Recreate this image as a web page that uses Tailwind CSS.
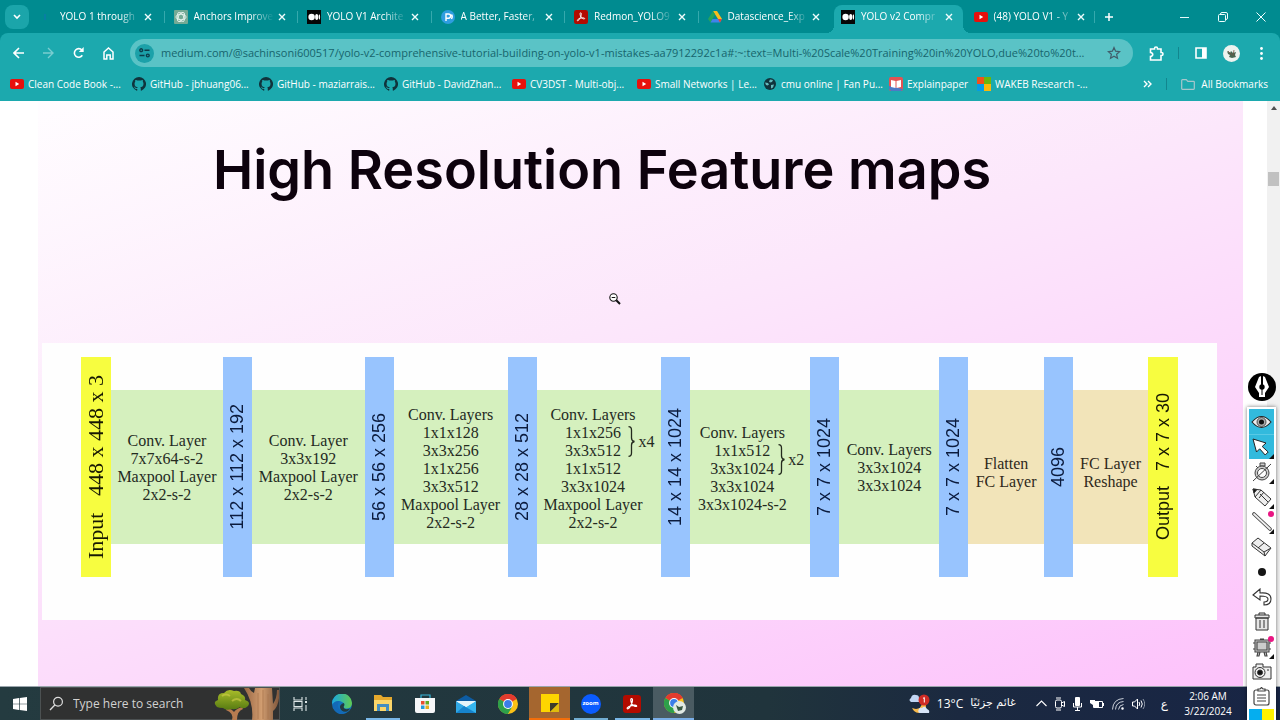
<!DOCTYPE html>
<html lang="en">
<head>
<meta charset="utf-8">
<meta name="viewport" content="width=device-width, initial-scale=1">
<title>YOLO v2 Comprehensive Tutorial</title>
<script src="https://cdn.jsdelivr.net/npm/@tailwindcss/browser@4"></script>
</head>
<body class="flex h-screen flex-col overflow-hidden bg-white font-['Open_Sans','Noto_Sans',sans-serif] text-[10px] text-white">

<svg width="0" height="0" class="absolute" aria-hidden="true">
  <symbol id="close" viewBox="0 0 8 8"><path d="M1 1l6 6M7 1L1 7" stroke="#effcfc" stroke-width="1.4" fill="none"/></symbol>
  <symbol id="youtube" viewBox="0 0 14 10"><rect width="14" height="10" rx="2" fill="#e8100c"/><path d="M5.5 2.8v4.4L9.2 5z" fill="#fff"/></symbol>
  <symbol id="medium" viewBox="0 0 14 14"><rect width="14" height="14" fill="#060606"/><circle cx="4.6" cy="7" r="3.2" fill="#fff"/><ellipse cx="9.7" cy="7" rx="1.6" ry="3" fill="#fff"/><ellipse cx="12.4" cy="7" rx=".7" ry="2.7" fill="#fff"/></symbol>
  <symbol id="github" viewBox="0 0 16 16"><path fill="#10333c" d="M8 0a8 8 0 0 0-2.53 15.59c.4.07.55-.17.55-.38v-1.49c-2.01.37-2.53-.49-2.69-.94-.09-.23-.48-.94-.82-1.13-.28-.15-.68-.52-.01-.53.63-.01 1.08.58 1.23.82.72 1.21 1.87.87 2.33.66.07-.52.28-.87.51-1.07-1.78-.2-3.64-.89-3.64-3.95 0-.87.31-1.59.82-2.15-.08-.2-.36-1.02.08-2.12 0 0 .67-.21 2.2.82a7.6 7.6 0 0 1 4 0c1.53-1.04 2.2-.82 2.2-.82.44 1.1.16 1.92.08 2.12.51.56.82 1.27.82 2.15 0 3.07-1.87 3.75-3.65 3.95.29.25.54.73.54 1.48v2.2c0 .21.15.46.55.38A8 8 0 0 0 8 0"/></symbol>
  <symbol id="acrobat" viewBox="0 0 18 18"><rect width="18" height="18" rx="3" fill="#b30b00"/><path d="M8.6 3.6c1.500 0 .9 3.300-.4 6-1 2.200-2.600 4.500-3.700 4.200-1.200-.5.600-2.300 3.900-3.200 2.700-.8 5.300-.7 5.300.3 0 1.300-2.700.400-4.300-1.400-1.500-1.800-2.300-5.900-.8-5.900z" fill="none" stroke="#fff" stroke-width="1.200"/></symbol>
  <symbol id="chrome" viewBox="0 0 20 20"><circle cx="10" cy="10" r="10" fill="#fbc116"/><path d="M10 10L1.300 5A10 10 0 0 1 18.700 5z" fill="#e33b2e"/><path d="M10 0A10 10 0 0 1 18.700 5H10z" fill="#e33b2e"/><path d="M1.300 5A10 10 0 0 0 10 20l4.300-7.500L10 10z" fill="#2da04a"/><circle cx="10" cy="10" r="4.900" fill="#fff"/><circle cx="10" cy="10" r="3.900" fill="#3b7de9"/></symbol>
  <symbol id="corner" viewBox="0 0 5 5"><path d="M5 0v5H0z" fill="#111"/></symbol>
</svg>

<header class="shrink-0 bg-[#008b90]">
  <div class="flex h-[33px] items-center">
    <button aria-label="Search tabs" class="ml-[5px] mr-1 flex h-6 w-6 shrink-0 items-center justify-center rounded-lg bg-[#1ba5aa]"><svg width="8" height="6" viewBox="0 0 8 6"><path d="M1 1l3 3 3-3" fill="none" stroke="#fff" stroke-width="1.600"/></svg></button>
    <nav aria-label="Tabs" class="flex h-full w-[1067px] text-[11px]">
      <div class="relative flex min-w-0 flex-1 items-center pl-[7px]"><svg class="h-[14px] w-[14px] shrink-0" viewBox="0 0 14 14"><path d="M5 4v6" stroke="#087fa3" stroke-width="2"/></svg><a href="#" class="ml-[6px] w-[80px] whitespace-nowrap text-[10px] [mask-image:linear-gradient(to_right,black_75%,transparent)]">YOLO 1 through</a><button aria-label="Close tab" class="ml-1"><svg width="8" height="8"><use href="#close"/></svg></button><i class="absolute right-[2px] h-3 w-px bg-[#35a9ad]"></i></div>
      <div class="relative flex min-w-0 flex-1 items-center pl-[7px]"><svg class="h-[14px] w-[14px] shrink-0" viewBox="0 0 14 14"><rect width="14" height="14" rx="1" fill="#74aa95"/><g fill="none" stroke="#e8f5ef" stroke-width=".9"><ellipse cx="7" cy="7" rx="5" ry="2.700"/><ellipse cx="7" cy="7" rx="5" ry="2.700" transform="rotate(60 7 7)"/><ellipse cx="7" cy="7" rx="5" ry="2.700" transform="rotate(120 7 7)"/></g></svg><a href="#" class="ml-[6px] w-[80px] whitespace-nowrap text-[10px] [mask-image:linear-gradient(to_right,black_70%,transparent)]">Anchors Improve</a><button aria-label="Close tab" class="ml-1"><svg width="8" height="8"><use href="#close"/></svg></button><i class="absolute right-[2px] h-3 w-px bg-[#35a9ad]"></i></div>
      <div class="relative flex min-w-0 flex-1 items-center pl-[7px]"><svg class="h-[14px] w-[14px] shrink-0"><use href="#medium"/></svg><a href="#" class="ml-[6px] w-[80px] whitespace-nowrap text-[10px] [mask-image:linear-gradient(to_right,black_70%,transparent)]">YOLO V1 Archite</a><button aria-label="Close tab" class="ml-1"><svg width="8" height="8"><use href="#close"/></svg></button><i class="absolute right-[2px] h-3 w-px bg-[#35a9ad]"></i></div>
      <div class="relative flex min-w-0 flex-1 items-center pl-[7px]"><svg class="h-[14px] w-[14px] shrink-0" viewBox="0 0 14 14"><circle cx="7" cy="7" r="7" fill="#2e9ddf"/><path d="M5 11V4h2.500a2 2 0 0 1 0 4.200H5M10.500 4.500q1.500 2 0 4.500" fill="none" stroke="#fff" stroke-width="1.400"/></svg><a href="#" class="ml-[6px] w-[80px] whitespace-nowrap text-[10px] [mask-image:linear-gradient(to_right,black_80%,transparent)]">A Better, Faster,</a><button aria-label="Close tab" class="ml-1"><svg width="8" height="8"><use href="#close"/></svg></button><i class="absolute right-[2px] h-3 w-px bg-[#35a9ad]"></i></div>
      <div class="relative flex min-w-0 flex-1 items-center pl-[7px]"><svg class="h-[14px] w-[14px] shrink-0"><use href="#acrobat"/></svg><a href="#" class="ml-[6px] w-[80px] whitespace-nowrap text-[10px] [mask-image:linear-gradient(to_right,black_70%,transparent)]">Redmon_YOLO9</a><button aria-label="Close tab" class="ml-1"><svg width="8" height="8"><use href="#close"/></svg></button><i class="absolute right-[2px] h-3 w-px bg-[#35a9ad]"></i></div>
      <div class="relative flex min-w-0 flex-1 items-center pl-[7px]"><svg class="h-[14px] w-[14px] shrink-0" viewBox="0 0 14 14"><path d="M5 1h4l5 8h-4z" fill="#fbbc1c"/><path d="M5 1l2 3.500L2.500 12.500 0 9z" fill="#25a35b"/><path d="M4.500 9H14l-2 3.500H2.500z" fill="#4182eb"/><path d="M10 9h4l-2 3.500z" fill="#e94335"/></svg><a href="#" class="ml-[6px] w-[80px] whitespace-nowrap text-[10px] [mask-image:linear-gradient(to_right,black_75%,transparent)]">Datascience_Exp</a><button aria-label="Close tab" class="ml-1"><svg width="8" height="8"><use href="#close"/></svg></button></div>
      <div class="relative flex min-w-0 flex-1 items-center pl-[7px]"><div class="absolute bottom-0 left-0 right-[5px] top-[5px] rounded-t-lg bg-[#1ca9ae]"></div><i class="absolute -left-2 bottom-0 h-2 w-2 bg-[radial-gradient(circle_at_0_0,transparent_8px,#1ca9ae_8px)]"></i><i class="absolute bottom-0 right-[-3px] h-2 w-2 bg-[radial-gradient(circle_at_100%_0,transparent_8px,#1ca9ae_8px)]"></i><svg class="relative h-[14px] w-[14px] shrink-0"><use href="#medium"/></svg><a href="#" class="relative ml-[6px] w-[80px] whitespace-nowrap text-[10px] [mask-image:linear-gradient(to_right,black_70%,transparent)]">YOLO v2 Compr</a><button aria-label="Close tab" class="relative ml-1"><svg width="8" height="8"><use href="#close"/></svg></button></div>
      <div class="relative flex min-w-0 flex-1 items-center pl-[6px]"><svg class="h-[10px] w-[14px] shrink-0"><use href="#youtube"/></svg><a href="#" class="ml-[6px] w-[80px] whitespace-nowrap text-[10px] [mask-image:linear-gradient(to_right,black_75%,transparent)]">(48) YOLO V1 - Y</a><button aria-label="Close tab" class="ml-[3px]"><svg width="8" height="8"><use href="#close"/></svg></button><i class="absolute right-[5px] h-3 w-px bg-[#35a9ad]"></i></div>
    </nav>
    <button aria-label="New tab" class="ml-1"><svg width="10" height="10" viewBox="0 0 10 10"><path d="M5 1v8M1 5h8" stroke="#fff" stroke-width="1.500"/></svg></button>
    <div class="ml-auto flex items-center gap-7 pr-[14px]">
      <button aria-label="Minimize"><svg width="10" height="10" viewBox="0 0 10 10"><path d="M0 5.500h9" stroke="#e5fafa"/></svg></button>
      <button aria-label="Restore"><svg width="10" height="10" viewBox="0 0 10 10" fill="none" stroke="#f0ffff"><rect x=".5" y="2.500" width="7" height="7" rx="1"/><path d="M2.500 2.500V2q0-1.500 1.500-1.500h4q1.500 0 1.500 1.500v4q0 1.500-1.500 1.500"/></svg></button>
      <button aria-label="Close"><svg width="10" height="10" viewBox="0 0 10 10"><path d="M.5.500l9 9m0-9l-9 9" stroke="#f0ffff"/></svg></button>
    </div>
  </div>

  <div class="rounded-t-lg bg-[#1ca9ae]">
    <div class="flex h-10 items-center">
      <button aria-label="Back" class="ml-[13px]"><svg width="11" height="12" viewBox="0 0 11 12"><path d="M11 6H1.500M6 1L1 6l5 5" fill="none" stroke="#fff" stroke-width="1.600"/></svg></button>
      <button aria-label="Forward" class="ml-[19px]"><svg width="11" height="12" viewBox="0 0 11 12"><path d="M0 6h9.500M5 1l5 5-5 5" fill="none" stroke="#79cdd0" stroke-width="1.400"/></svg></button>
      <button aria-label="Reload" class="ml-[19px]"><svg width="11" height="12" viewBox="0 0 11 12"><path d="M9.300 8.300A4.300 4.300 0 1 1 9 3.200" fill="none" stroke="#fff" stroke-width="1.600"/><path d="M10.700 0v5H5.800z" fill="#fff"/></svg></button>
      <button aria-label="Home" class="ml-[19px]"><svg width="11" height="13" viewBox="0 0 11 13"><path d="M1 5l4.500-4L10 5v7H7.200V8H3.800v4H1z" fill="none" stroke="#fff" stroke-width="1.500"/></svg></button>
      <div class="ml-4 flex h-7 min-w-0 flex-1 items-center rounded-full bg-[#5ac3c6] pl-[5px] pr-3">
        <button aria-label="Site information" class="flex h-[19px] w-[19px] shrink-0 items-center justify-center rounded-full bg-[#1ca1a9]"><svg width="11" height="10" viewBox="0 0 11 10" fill="none" stroke="#0c3d4b" stroke-width="1.400"><circle cx="2.200" cy="2.200" r="1.400"/><path d="M5.500 2.200H10.500M.5 7.500h5"/><circle cx="8.800" cy="7.500" r="1.400"/></svg></button>
        <input aria-label="Address" class="ml-[7px] min-w-0 flex-1 bg-transparent text-[11px] text-[#17656d] outline-none" value="medium.com/@sachinsoni600517/yolo-v2-comprehensive-tutorial-building-on-yolo-v1-mistakes-aa7912292c1a#:~:text=Multi-%20Scale%20Training%20in%20YOLO,due%20to%20t...">
        <button aria-label="Bookmark this page"><svg width="14" height="14" viewBox="0 0 14 14"><path d="M7 1.500l1.600 3.700 4 .4-3 2.700.9 4L7 10.200l-3.500 2.100.9-4-3-2.700 4-.4z" fill="none" stroke="#415e6b" stroke-width="1.200"/></svg></button>
      </div>
      <button aria-label="Extensions" class="ml-4"><svg width="15" height="15" viewBox="0 0 15 15"><path d="M1.500 3h4V2.500a1.500 1.500 0 0 1 3 0V3h3.500v3.500h.5a1.500 1.500 0 0 1 0 3H12V14H1.500v-3.500C4.500 10 4.500 7 1.500 6.500z" fill="none" stroke="#fff" stroke-width="1.600"/></svg></button>
      <i class="ml-[14px] h-3 w-px bg-[#12868e]"></i>
      <button aria-label="Side panel" class="ml-4"><svg width="12" height="12" viewBox="0 0 12 12"><path d="M1 1h10v10H1z" fill="none" stroke="#fff" stroke-width="1.600"/><path d="M7 1h4v10H7z" fill="#fff"/></svg></button>
      <button aria-label="Profile" class="ml-4"><svg width="17" height="17" viewBox="0 0 17 17"><circle cx="8.500" cy="8.500" r="8.500" fill="#edf3ef"/><path d="M4 6l3 2 1-2 2 2 3-1-1 3 1 2-4 1-3-1 1-2-2-1z" fill="#486651"/><path d="M5 6l4 4m2-5l-1 6" stroke="#725040" stroke-width=".8"/></svg></button>
      <button aria-label="Menu" class="ml-5 mr-[17px]"><svg width="3" height="13" viewBox="0 0 3 13" fill="#fff"><circle cx="1.500" cy="1.500" r="1.400"/><circle cx="1.500" cy="6.500" r="1.400"/><circle cx="1.500" cy="11.500" r="1.400"/></svg></button>
    </div>
    <nav aria-label="Bookmarks" class="flex h-[28px] items-center whitespace-nowrap pb-[6px] pl-[10px] [&_svg]:shrink-0">
      <a href="#" class="flex w-[122px] items-center gap-1"><svg class="h-[10px] w-[14px]"><use href="#youtube"/></svg>Clean Code Book -...</a>
      <a href="#" class="flex w-[127px] items-center gap-1"><svg class="h-[14px] w-[14px]"><use href="#github"/></svg>GitHub - jbhuang06...</a>
      <a href="#" class="flex w-[125px] items-center gap-1"><svg class="h-[14px] w-[14px]"><use href="#github"/></svg>GitHub - maziarrais...</a>
      <a href="#" class="flex w-[128px] items-center gap-1"><svg class="h-[14px] w-[14px]"><use href="#github"/></svg>GitHub - DavidZhan...</a>
      <a href="#" class="flex w-[125px] items-center gap-1"><svg class="h-[10px] w-[14px]"><use href="#youtube"/></svg>CV3DST - Multi-obj...</a>
      <a href="#" class="flex w-[126px] items-center gap-1"><svg class="h-[10px] w-[14px]"><use href="#youtube"/></svg>Small Networks | Le...</a>
      <a href="#" class="flex w-[126px] items-center gap-1"><svg class="h-[12px] w-[14px]" viewBox="0 0 12 12"><circle cx="6" cy="6" r="6" fill="#10333c"/><path d="M1 4.500l3 .5 1 1.500-1.500 1L2 7zM6 1.500l3 .5-1 2-2 .5-1-1zM7 7l3-.5-1 3-2 1z" fill="#65babd"/></svg>cmu online | Fan Pu...</a>
      <a href="#" class="flex w-[88px] items-center gap-1"><svg class="h-[14px] w-[14px]" viewBox="0 0 14 14"><rect width="14" height="14" rx="2" fill="#e35353"/><path d="M0 12V9l14 3-2 2H2z" fill="#4d79c6"/><path d="M2 3l4.500 1v7L2 10zM12 3L7.500 4v7l4.500-1z" fill="#fff"/></svg>Explainpaper</a>
      <a href="#" class="flex items-center gap-1"><svg class="h-[14px] w-[14px]" viewBox="0 0 14 14"><path d="M0 0h7v7H0z" fill="#f1511b"/><path d="M7 0h7v7H7z" fill="#6cb60b"/><path d="M0 7h7v7H0z" fill="#059de5"/><path d="M7 7h7v7H7z" fill="#f9b90a"/></svg>WAKEB Research -...</a>
      <button aria-label="More bookmarks" class="ml-auto"><svg width="9" height="8" viewBox="0 0 9 8"><path d="M1 1l3 3-3 3m4-6l3 3-3 3" fill="none" stroke="#fff" stroke-width="1.400"/></svg></button>
      <i class="ml-[14px] h-3 w-px bg-[#12868e]"></i>
      <a href="#" class="ml-[14px] mr-3 flex items-center gap-[6px]"><svg width="14" height="11" viewBox="0 0 14 11"><path d="M.7 1.500q0-.8.800-.8h3.800l1.500 1.600h5.700q.8 0 .8.800v6.400q0 .8-.8.800h-11q-.8 0-.8-.8z" fill="none" stroke="#a7c7cc" stroke-width="1.200"/></svg>All Bookmarks</a>
    </nav>
  </div>
</header>

<main class="relative flex min-h-0 flex-1 pl-[38px]">
  <section class="flex min-w-0 flex-1 flex-col bg-[linear-gradient(162deg,#fffdff_0%,#fce7fb_42%,#fcd7fb_68%,#fdc2fb_100%)]">
    <h1 class="pr-[77px] pt-[33px] text-center font-['Inter',sans-serif] text-[54px] font-semibold leading-[72px] text-[#0d020d]">High Resolution Feature maps</h1>
    <div class="ml-[4px] mr-[26px] mt-[137px] flex h-[277px] items-start bg-[#fefefe] pl-[39px] pr-[39px] pt-[14px] font-['Liberation_Serif',serif] text-[16px] leading-[18px] text-[#242a1e]">
      <div class="flex h-[220px] w-full items-center whitespace-nowrap text-center">
        <div class="flex h-full w-[30px] shrink-0 items-center justify-center bg-[#f7fd40] text-[22px] leading-[30px] text-[#171803]"><span class="rotate-180 whitespace-pre [writing-mode:vertical-rl]">Input   448 x 448 x 3</span></div>
        <div class="flex h-[154px] min-w-0 grow-[112] basis-0 flex-col items-center justify-center bg-[#d5f0be] pt-[2px]"><p>Conv. Layer</p><p>7x7x64-s-2</p><p>Maxpool Layer</p><p>2x2-s-2</p></div>
        <div class="flex h-full w-[29px] shrink-0 items-center justify-center bg-[#98c4fe] font-['Liberation_Sans',sans-serif] text-[18px] leading-[29px] text-[#0b1b3d]"><span class="rotate-180 [writing-mode:vertical-rl]">112 x 112 x 192</span></div>
        <div class="flex h-[154px] min-w-0 grow-[113] basis-0 flex-col items-center justify-center bg-[#d5f0be] pt-[2px]"><p>Conv. Layer</p><p>3x3x192</p><p>Maxpool Layer</p><p>2x2-s-2</p></div>
        <div class="flex h-full w-[29px] shrink-0 items-center justify-center bg-[#98c4fe] font-['Liberation_Sans',sans-serif] text-[18px] leading-[29px] text-[#0b1b3d]"><span class="rotate-180 [writing-mode:vertical-rl]">56 x 56 x 256</span></div>
        <div class="flex h-[154px] min-w-0 grow-[114] basis-0 flex-col items-center justify-center bg-[#d5f0be] pt-1"><p>Conv. Layers</p><p>1x1x128</p><p>3x3x256</p><p>1x1x256</p><p>3x3x512</p><p>Maxpool Layer</p><p>2x2-s-2</p></div>
        <div class="flex h-full w-[29px] shrink-0 items-center justify-center bg-[#98c4fe] font-['Liberation_Sans',sans-serif] text-[18px] leading-[29px] text-[#0b1b3d]"><span class="rotate-180 [writing-mode:vertical-rl]">28 x 28 x 512</span></div>
        <div class="relative flex h-[154px] min-w-0 grow-[125] basis-0 flex-col items-center justify-center bg-[#d5f0be] pt-1"><div class="pr-3"><p>Conv. Layers</p><p>1x1x256</p><p>3x3x512</p><p>1x1x512</p><p>3x3x1024</p><p>Maxpool Layer</p><p>2x2-s-2</p></div>
          <div class="absolute right-[7px] top-[36px] flex items-center gap-[3px]"><svg width="7" height="31" viewBox="0 0 7 31"><path d="M.5.700Q3.500.700 3.500 4v8q0 3 3 3.500-3 .5-3 3.500v8q0 3.300-3 3.300" fill="none" stroke="#242a1e" stroke-width="1.300"/></svg>x4</div></div>
        <div class="flex h-full w-[29px] shrink-0 items-center justify-center bg-[#98c4fe] font-['Liberation_Sans',sans-serif] text-[18px] leading-[29px] text-[#0b1b3d]"><span class="rotate-180 [writing-mode:vertical-rl]">14 x 14 x 1024</span></div>
        <div class="relative flex h-[154px] min-w-0 grow-[120] basis-0 flex-col items-center justify-center bg-[#d5f0be] pt-1"><div class="pr-4"><p>Conv. Layers</p><p>1x1x512</p><p>3x3x1024</p><p>3x3x1024</p><p>3x3x1024-s-2</p></div>
          <div class="absolute right-[6px] top-[54px] flex items-center gap-[3px]"><svg width="7" height="31" viewBox="0 0 7 31"><path d="M.5.700Q3.500.700 3.500 4v8q0 3 3 3.500-3 .5-3 3.500v8q0 3.300-3 3.300" fill="none" stroke="#242a1e" stroke-width="1.300"/></svg>x2</div></div>
        <div class="flex h-full w-[29px] shrink-0 items-center justify-center bg-[#98c4fe] font-['Liberation_Sans',sans-serif] text-[18px] leading-[29px] text-[#0b1b3d]"><span class="rotate-180 [writing-mode:vertical-rl]">7 x 7 x 1024</span></div>
        <div class="flex h-[154px] min-w-0 grow-[100] basis-0 flex-col items-center justify-center bg-[#d5f0be] pt-[2px]"><p>Conv. Layers</p><p>3x3x1024</p><p>3x3x1024</p></div>
        <div class="flex h-full w-[29px] shrink-0 items-center justify-center bg-[#98c4fe] font-['Liberation_Sans',sans-serif] text-[18px] leading-[29px] text-[#0b1b3d]"><span class="rotate-180 [writing-mode:vertical-rl]">7 x 7 x 1024</span></div>
        <div class="flex h-[154px] min-w-0 grow-[76] basis-0 flex-col items-center justify-center bg-[#f2e4b9] pt-3 text-[#2f291b]"><p>Flatten</p><p>FC Layer</p></div>
        <div class="flex h-full w-[29px] shrink-0 items-center justify-center bg-[#98c4fe] font-['Liberation_Sans',sans-serif] text-[18px] leading-[29px] text-[#0b1b3d]"><span class="rotate-180 [writing-mode:vertical-rl]">4096</span></div>
        <div class="flex h-[154px] min-w-0 grow-[75] basis-0 flex-col items-center justify-center bg-[#f2e4b9] pt-3 text-[#2f291b]"><p>FC Layer</p><p>Reshape</p></div>
        <div class="flex h-full w-[30px] shrink-0 items-center justify-center bg-[#f7fd40] font-['Liberation_Sans',sans-serif] text-[18px] leading-[30px] text-[#171803]"><span class="rotate-180 whitespace-pre [writing-mode:vertical-rl]">Output   7 x 7 x 30</span></div>
      </div>
    </div>
  </section>
  <div class="w-6 shrink-0 bg-white"></div>
  <div class="flex w-[13px] shrink-0 flex-col items-center bg-[#f1f1f1]" aria-label="Scrollbar"><svg class="mt-[5px]" width="6" height="4" viewBox="0 0 6 4"><path d="M0 4l3-4 3 4z" fill="#505050"/></svg><div class="mt-[62px] h-[14px] w-[11px] bg-[#c1c1c1]"></div></div>
  <svg class="absolute left-[609px] top-[192px]" width="12" height="12" viewBox="0 0 12 12" aria-hidden="true"><circle cx="4.500" cy="4.500" r="3.700" fill="#fff" stroke="#111" stroke-width="1.100"/><path d="M2.700 4.500h3.600" stroke="#111"/><path d="M7.300 7.300l3.700 3.700" stroke="#111" stroke-width="2"/></svg>
</main>

<footer class="flex h-[34px] shrink-0 items-center border-t border-[#9aa5ac] bg-[linear-gradient(to_right,#243b40,#20343c_60%,#1b2940_75%,#182545)]">
  <button aria-label="Start" class="flex w-10 shrink-0 justify-center"><svg width="14" height="14" viewBox="0 0 14 14" fill="#fff"><path d="M0 2l6-1v5.700H0zM6.700.900L14 0v6.700H6.700zM0 7.300h6V13l-6-1zM6.700 7.300H14V14l-7.300-.9z"/></svg></button>
  <label class="flex h-full w-[240px] shrink-0 items-center border border-[#4c5152] bg-[#303131] pl-2"><svg width="15" height="15" viewBox="0 0 15 15"><circle cx="9" cy="5.700" r="4.400" fill="none" stroke="#ddd" stroke-width="1.200"/><path d="M5.800 9L1 14" stroke="#ddd" stroke-width="1.300"/></svg>
    <input aria-label="Search" placeholder="Type here to search" class="ml-[9px] w-[130px] bg-transparent text-[12px] text-white outline-none placeholder:text-[#d2d2d2]">
    <svg class="ml-auto shrink-0" width="65" height="32" viewBox="0 0 65 32"><defs><linearGradient id="bark"><stop stop-color="#9a6744"/><stop offset=".5" stop-color="#d19d70"/><stop offset="1" stop-color="#80573c"/></linearGradient><linearGradient id="leaf" x2="0" y2="1"><stop stop-color="#a9bd2a"/><stop offset="1" stop-color="#577b12"/></linearGradient></defs><path d="M18 32q2-7-6-10l1-2q5 1 7 4 2-3 8-5l1 2q-6 2-6 11z" fill="#b77b50"/><path d="M3 19Q-2 14 4 12q-1-7 6-7 4-5 10-2 6-1 7 3 5 2 4 6 6 2 3 6-4 4-8 1-4 3-8 2-6 2-9-1-4 0-6-1z" fill="url(#leaf)"/><path d="M8 8q4-3 8 0m2 5q5-4 9 0" stroke="#d2d04b" stroke-width="2" fill="none" opacity=".6"/><path d="M38 32q2-17-8-32h5q2 4 5 5l1-5h17l1 16q4-6 4-14h2v8q-1 9-6 13v9z" fill="url(#bark)"/><path d="M44 5v26m5-29v29m5-25v25" stroke="#a8744c" stroke-width="1" opacity=".7"/></svg>
  </label>
  <nav aria-label="Taskbar" class="flex h-full items-center">
    <button aria-label="Task view" class="flex w-[41px] justify-center"><svg width="15" height="14" viewBox="0 0 15 14" fill="none" stroke="#dde5e6" stroke-width="1.100"><path d="M1 0v3h8V0M1 14v-3h8v3M1 4.500h8v5H1zM13 0v3m0 5v6"/><path d="M12 5h2" stroke-width="2"/></svg></button>
    <button aria-label="Edge" class="flex w-[41px] justify-center"><svg width="20" height="20" viewBox="0 0 20 20"><defs><linearGradient id="edge1"><stop stop-color="#19a8e2"/><stop offset="1" stop-color="#61cb50"/></linearGradient></defs><circle cx="10" cy="10" r="10" fill="#1372bd"/><path d="M0 10A10 10 0 0 1 20 9q0 5-5 5.500-3 .3-3.500-1.500 2-3-.5-4.500Q5 5 0 10z" fill="url(#edge1)"/><path d="M12 9q1 2-.5 4 1 3.500 6.500 1.500-1 2-3 3-6 1-7-4-.5-3 4-4.500z" fill="#233a40"/><path d="M1 13q0-7 7-6Q5 9 6 13q2 5 8 6-9 4-13-6z" fill="#1369b7"/></svg></button>
    <button aria-label="File Explorer" class="relative flex h-full w-[42px] items-center justify-center"><svg width="20" height="17" viewBox="0 0 20 17"><path d="M1 0h7l2 2h9v14H1z" fill="#e6a92d"/><path d="M1 5h18v11H1z" fill="#fbd66a"/><path d="M4 16V9h12v7h-3v-4H7v4z" fill="#458ec1"/></svg><i class="absolute bottom-0 left-[4px] right-[4px] h-[2px] bg-[#79b7e7]"></i></button>
    <button aria-label="Microsoft Store" class="flex w-[41px] justify-center"><svg width="20" height="20" viewBox="0 0 20 20"><path d="M6 5V1h9v4" fill="none" stroke="#38b5d7" stroke-width="1.200"/><path d="M0 4h20v13q0 2-2 2H2q-2 0-2-2z" fill="#f6f7f8"/><path d="M6 7h3.500v3.500H6z" fill="#ea4d2e"/><path d="M10.500 7H14v3.500h-3.500z" fill="#64aa22"/><path d="M6 11.500h3.500V15H6z" fill="#249bdb"/><path d="M10.500 11.500H14V15h-3.500z" fill="#e8ae1e"/></svg></button>
    <button aria-label="Mail" class="flex w-[42px] justify-center"><svg width="20" height="18" viewBox="0 0 20 18"><path d="M0 6l10-6 10 6v12H0z" fill="#0d5ca3"/><path d="M1 6h18v11H1z" fill="#e5f4fa"/><path d="M0 6l10 6L0 18z" fill="#31a8e5"/><path d="M20 6v12H0z" fill="#36b6ef"/><path d="M0 6h20L10 12z" fill="#e5f4fa"/><path d="M0 18l8-7 12 7z" fill="#1684cd"/></svg></button>
    <button aria-label="Chrome" class="flex w-[42px] justify-center"><svg width="20" height="20"><use href="#chrome"/></svg></button>
    <button aria-label="Sticky Notes" class="flex h-full w-[41px] items-center justify-center border-b-2 border-[#f36e0a] bg-[#a5662f]"><svg width="18" height="18" viewBox="0 0 18 18"><path d="M0 0h18v9l-9 9H0z" fill="#fdd500"/><path d="M9 9h9l-9 9z" fill="#3c3c2b"/><path d="M9 18h9V9z" fill="#e0bc0d"/></svg></button>
    <button aria-label="Zoom" class="relative flex h-full w-[41px] items-center justify-center"><span class="flex h-5 w-5 items-center justify-center rounded-full bg-[#0b5cff] text-[6px] font-bold">zoom</span><i class="absolute bottom-0 left-[4px] right-[3px] h-[2px] bg-[#72add2]"></i></button>
    <button aria-label="Acrobat" class="relative flex h-full w-[42px] items-center justify-center"><svg width="18" height="18"><use href="#acrobat"/></svg><i class="absolute bottom-0 left-[4px] right-[3px] h-[2px] bg-[#79b7e7]"></i></button>
    <button aria-label="Chrome profile window" class="relative flex h-full w-[41px] items-center justify-center border-b-2 border-[#79aee7] bg-[#4a5b62]"><svg width="20" height="20"><use href="#chrome"/></svg><svg class="absolute bottom-[4px] right-[8px]" width="13" height="13" viewBox="0 0 13 13"><circle cx="6.500" cy="6.500" r="6.500" fill="#e1e9e3"/><path d="M3 4l3 2 4-1-1 4-4 1z" fill="#385944"/></svg></button>
  </nav>
  <div class="ml-auto mr-12 flex shrink-0 items-center">
    <button aria-label="Weather" class="flex items-center gap-[7px] text-[12px]"><svg width="21" height="20" viewBox="0 0 21 20"><circle cx="10" cy="12" r="7" fill="#f8b94b"/><circle cx="7" cy="9" r="6" fill="#1b2940"/><path d="M2 8q-3-2 0-4 1-4 5-3 3 0 3 3 3 1 1 4z" fill="#c1d5f3"/><path d="M11 19q-3-1-1-4 1-2 3-1 3-3 5 1 3 1 2 4z" fill="#d8e5f8"/><circle cx="15" cy="6" r="5.500" fill="#cf2b25"/><path d="M14 4.500L15.300 3.500V8.500" fill="none" stroke="#fff"/></svg><span>13°C</span><span lang="ar" dir="rtl" class="font-['DejaVu_Sans',sans-serif] text-[11px]">غائم جزئيًا</span></button>
    <div class="ml-5 flex items-center gap-2">
      <button aria-label="Show hidden icons"><svg width="11" height="7" viewBox="0 0 11 7"><path d="M.5 6l5-5 5 5" fill="none" stroke="#fff" stroke-width="1.100"/></svg></button>
      <svg width="10" height="14" viewBox="0 0 10 14" fill="none" stroke="#fff"><rect x=".5" y="3" width="6" height="8" rx="1.500"/><path d="M6.500 6L9.500 4.500v5L6.500 8M1 1h5M1 13h5"/></svg>
      <svg width="9" height="14" viewBox="0 0 9 14"><rect x="2" width="5" height="9" rx="1" fill="#fff"/><path d="M.5 6v4h8V6M4.500 10v3M2 13.500h5" fill="none" stroke="#fff"/></svg>
      <svg width="14" height="10" viewBox="0 0 14 10"><path d="M3.500 2.500h9v6h-9z" fill="none" stroke="#fff"/><path d="M4 3h5v5H4zM13 4h1v3h-1zM0 1h5v3l-2 2-3-2z" fill="#fff"/></svg>
      <svg width="12" height="12" viewBox="0 0 12 12" fill="none" stroke="#cbd1da"><path d="M.5 11.500Q1 1 11.500.500M3.500 11.500Q4 4 11.500 3.500M6.500 11.500Q7 7 11.500 6.500"/><circle cx="10.500" cy="10.500" r="1" fill="#fff"/></svg>
      <svg width="13" height="12" viewBox="0 0 13 12" fill="none" stroke="#fff"><path d="M.5 4h2l3-3v10l-3-3h-2zM7 4q1.500 2 0 4M9 2.500q2.500 3.500 0 7"/><path d="M11 1q3.500 5 0 10" stroke="#8b95a5"/></svg>
    </div>
    <span lang="ar" class="ml-4 font-['DejaVu_Sans',sans-serif] text-[12px]">ع</span>
    <time class="ml-4 w-[48px] whitespace-nowrap text-center leading-[15px]">2:06 AM<br>3/22/2024</time>
  </div>
</footer>

<aside aria-label="Annotation tools" class="fixed bottom-0 right-[4px] z-10 flex w-[29px] flex-col items-center">
  <button aria-label="Pen" class="mb-[6px]"><svg width="28" height="28" viewBox="0 0 28 28"><circle cx="14" cy="14" r="14" fill="#000"/><path d="M11 4L7 14l4 6v4h6v-4l4-6-4-10-2-1v9h-2V3z" fill="#fff"/><circle cx="14" cy="14" r="2.700"/><path d="M14 14v8" stroke="#000"/></svg></button>
  <div class="flex w-full flex-col items-center border-x-2 border-t-2 border-white bg-white shadow-[0_0_4px_#0008] [&>button]:relative [&>button]:flex [&>button]:h-[25px] [&>button]:w-full [&>button]:shrink-0 [&>button]:items-center [&>button]:justify-center">
    <button aria-label="Show" class="bg-[#32badd]"><svg width="21" height="14" viewBox="0 0 21 14"><path d="M1 7q9.500-11 19 0-9.500 11-19 0z" fill="#eee" stroke="#222" stroke-width="1.100"/><circle cx="10.500" cy="7" r="4.500" fill="#aaa" stroke="#333" stroke-width=".8"/><circle cx="10.500" cy="7" r="2.500" fill="#111"/></svg></button>
    <button aria-label="Select" class="border-t border-[#59c9e5] bg-[#32badd]"><svg width="19" height="19" viewBox="0 0 19 19"><path d="M1 1l3.500 13 3.200-3.200 5.500 6.200 3-3-6-5.500L14 5z" fill="#fff" stroke="#222" stroke-width="1"/></svg><svg class="absolute bottom-0 right-0" width="5" height="5"><use href="#corner"/></svg></button>
    <button aria-label="Timer"><svg width="20" height="20" viewBox="0 0 20 20" fill="#ccc" stroke="#444" stroke-width="1"><path d="M8 1h5v3H8z"/><circle cx="10" cy="11" r="7"/><circle cx="10" cy="11" r="4.500" fill="#fff"/><path d="M1 19L19 2M4 4l2 2m9 0l2-2"/></svg><svg class="absolute bottom-0 right-0" width="5" height="5"><use href="#corner"/></svg></button>
    <button aria-label="Marker"><svg width="20" height="20" viewBox="0 0 20 20" fill="#eee" stroke="#333" stroke-width="1"><path d="M1 2l8 1 10 9-6 7L3 10z"/><path d="M9 3L3 10m5-3l8 8m-4-10l-5 6"/><path d="M1 2l4 .5L2 6z" fill="#111"/></svg><svg class="absolute bottom-0 right-0" width="5" height="5"><use href="#corner"/></svg></button>
    <button aria-label="Line"><svg width="20" height="20" viewBox="0 0 20 20"><path d="M2 2l16 15" stroke="#444" stroke-width="3.600" stroke-linecap="round"/><path d="M2 2l16 15" stroke="#eee" stroke-width="1.800" stroke-linecap="round"/></svg><i class="absolute right-0 top-[2px] h-[6px] w-[6px] rounded-full bg-[#e91683]"></i><svg class="absolute bottom-0 right-0" width="5" height="5"><use href="#corner"/></svg></button>
    <button aria-label="Eraser"><svg width="21" height="20" viewBox="0 0 21 20" fill="#eee" stroke="#333" stroke-width="1"><path d="M1 6l6-5 13 10-6 8L1 9z"/><path d="M1 6l12 9 7-4m-7 4l1 4M7 11l6-5"/></svg></button>
    <button aria-label="Size"><i class="h-2 w-2 rounded-full bg-[#151515]"></i></button>
    <button aria-label="Undo"><svg width="20" height="18" viewBox="0 0 20 18"><path d="M1 7l7-6v4q11-1 11 6 0 6-7 6v-3q4 0 4-3 0-3-8-3v4z" fill="#fff" stroke="#333" stroke-width="1.100"/></svg></button>
    <button aria-label="Delete"><svg width="16" height="19" viewBox="0 0 16 19" fill="#e6e6e6" stroke="#333" stroke-width="1"><path d="M5 3V1h6v2M1 3h14v3H1zM2 6h12v12H2zM6 8v8m4-8v8"/></svg></button>
    <button aria-label="Whiteboard"><svg width="18" height="20" viewBox="0 0 18 20" fill="#ccc" stroke="#444" stroke-width="1.100"><path d="M5 15l-1 4h2l1-4m4 0l1 4h2l-1-4M7 2h4M2 3h14v12H2zM0 6h2m14 0h2M0 12h2m14 0h2M4 5h10v8H4z"/></svg><i class="absolute right-0 top-[2px] h-[6px] w-[6px] rounded-full bg-[#e91683]"></i><svg class="absolute bottom-0 right-0" width="5" height="5"><use href="#corner"/></svg></button>
    <button aria-label="Camera"><svg width="20" height="17" viewBox="0 0 20 17" fill="#eee" stroke="#333" stroke-width="1"><path d="M1 4h3V1h7v3h8v12H1z"/><circle cx="8" cy="9.500" r="5"/><circle cx="8" cy="9.500" r="2.500" fill="#111"/><path d="M15 7h2"/></svg></button>
    <button aria-label="Clipboard"><svg width="17" height="19" viewBox="0 0 17 19" fill="#fff" stroke="#444" stroke-width="1.200"><rect x="1" y="3" width="15" height="15" rx="2"/><path d="M5 4V2h2l1.500-1.500L10 2h2v2zM4 8h9m-9 3h9m-9 3h9"/></svg></button>
    <div class="flex h-[11px] w-full"><i class="flex-1 bg-[#05aeef]"></i><i class="flex-1 bg-[#fff200]"></i></div>
  </div>
</aside>
</body>
</html>
